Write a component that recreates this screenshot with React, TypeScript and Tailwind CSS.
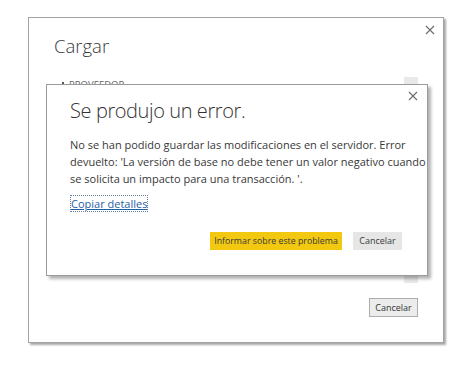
import React from "react";

const font = { fontFamily: '"Open Sans", "Noto Sans", sans-serif' };

function X({ className }: { className?: string }) {
  return (
    <svg className={className} width="10" height="10" viewBox="0 0 10 10">
      <path d="M1 1 L9 9 M9 1 L1 9" stroke="#6b6b6b" strokeWidth="1.1" fill="none" />
    </svg>
  );
}

export default function App() {
  return (
    <div className="relative w-[474px] h-[371px] bg-white overflow-hidden" style={font}>
      <div className="relative flex flex-col ml-[28px] mt-[17px] w-[416px] h-[326px] bg-white border border-[#a3a3a3] shadow-[2px_2px_2px_rgba(0,0,0,0.35)]">
        <X className="absolute right-[8px] top-[7px]" />
        <div className="pl-[25px] pt-[15px] text-[18.5px] font-light text-[#3a3a3a] leading-[26px]">Cargar</div>
        <div className="flex items-center pl-[33px] pt-[20px] gap-[5px]">
          <span className="w-[2px] h-[2px] bg-[#555] -mt-[5px]" />
          <span className="text-[9.5px] text-[#666] leading-[12px]">PROVEEDOR</span>
        </div>
        <div className="absolute left-[375px] top-[59px] w-[14px] h-[206px] bg-[#e9e9e9]" />
        <div className="mt-auto flex justify-end pr-[25px] pb-[25px]">
          <button className="w-[49px] h-[19px] border border-[#adadad] bg-[#ececec] text-[9px] text-[#333] leading-[17px]">Cancelar</button>
        </div>
      </div>

      <div className="absolute left-[46px] top-[84px] w-[382px] h-[192px] bg-white border border-[#9a9a9a] shadow-[3px_3px_3px_rgba(0,0,0,0.3)]">
        <X className="absolute right-[9px] top-[6px]" />
        <div className="pl-[23px] pt-[10px] text-[20px] tracking-[-0.4px] font-light text-[#333] leading-[31px]">Se produjo un error.</div>
        <div className="pl-[23px] pt-[10px] text-[11px] text-[#383838] leading-[17px]">
          <div className="whitespace-nowrap">No se han podido guardar las modificaciones en el servidor. Error</div>
          <div className="whitespace-nowrap">devuelto: 'La versión de base no debe tener un valor negativo cuando</div>
          <div className="whitespace-nowrap">se solicita un impacto para una transacción. '.</div>
        </div>
        <div className="pl-[23px] pt-[3px]">
          <span className="inline-block border border-dotted border-[#6b7fa3] text-[11px] leading-[15px] text-[#1f5fa8] underline">Copiar detalles</span>
        </div>
        <div className="flex justify-end gap-[11px] pr-[25px] pt-[18px]">
          <button className="w-[132px] h-[18px] bg-[#f2c811] text-[8.8px] text-[#3a3a3a] leading-[18px] whitespace-nowrap">Informar sobre este problema</button>
          <button className="w-[49px] h-[18px] bg-[#e6e6e6] text-[9px] text-[#3a3a3a] leading-[18px]">Cancelar</button>
        </div>
      </div>
    </div>
  );
}
